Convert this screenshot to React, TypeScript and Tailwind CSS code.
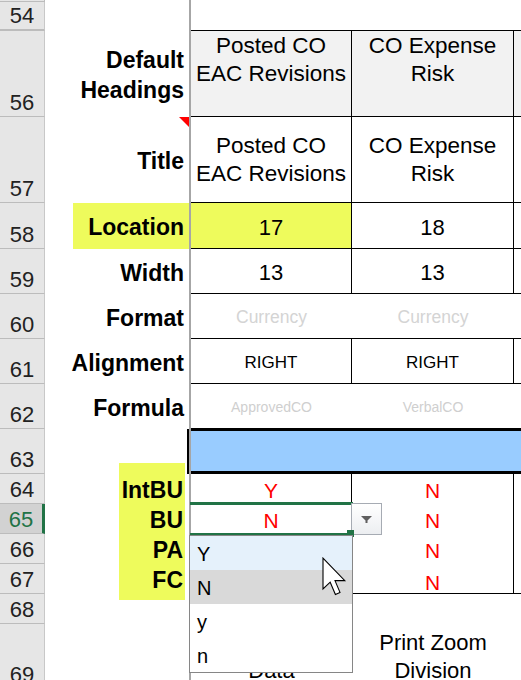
import React from 'react';

const LBL =
  'w-[144px] shrink-0 flex items-center justify-end pr-[5px] pt-[2px] text-right font-bold text-[23px] leading-[30px]';

function Head({
  n,
  active,
  thick,
  className = '',
}: {
  n?: string;
  active?: boolean;
  thick?: boolean;
  className?: string;
}) {
  return (
    <div
      className={`w-[45px] shrink-0 flex items-end justify-center pb-[2px] text-[22px] leading-[22px] border-b-[#bcbcbc] ${
        thick ? 'border-b-2' : 'border-b'
      } ${
        active
          ? 'bg-[#d2d2d2] text-[#217346] border-r-[3px] border-r-[#217346]'
          : 'bg-[#e6e6e6] text-[#222222] border-r border-r-[#c8c8c8]'
      } ${className}`}
    >
      {n}
    </div>
  );
}

const Split = () => <div className="w-[2px] shrink-0 bg-[#a6a6a6]" />;

function Caret() {
  return (
    <svg width="11" height="7" viewBox="0 0 11 7">
      <path d="M0 0 H11 L6.5 4.5 V7 H4.5 V4.5 Z" fill="#5f5f5f" />
    </svg>
  );
}

function Cursor() {
  return (
    <svg width="28" height="42" viewBox="0 0 14 21">
      <path
        d="M1 1 L1 16.5 L4.6 13.1 L7.2 19.2 L9.5 18.2 L7 12.3 L11.9 12.3 Z"
        fill="white"
        stroke="black"
        strokeWidth="0.55"
      />
    </svg>
  );
}

export default function App() {
  return (
    <div className="h-[680px] w-[521px] overflow-hidden bg-white text-black font-['Liberation_Sans',Arial,sans-serif]">
      {/* 53 */}
      <div className="flex h-[2px]">
        <div className="w-[45px] shrink-0 bg-[#e6e6e6] border-b border-r border-[#bcbcbc]" />
        <div className="w-[144px] shrink-0" />
        <Split />
        <div className="flex-1" />
      </div>

      {/* 54 */}
      <div className="flex h-[29px]">
        <Head n="54" thick />
        <div className="w-[144px] shrink-0" />
        <Split />
        <div className="flex-1 min-w-0 border-b border-black" />
      </div>

      {/* 56 */}
      <div className="flex h-[86px]">
        <Head n="56" />
        <div className={LBL}>
          <div>
            Default
            <br />
            Headings
          </div>
        </div>
        <Split />
        <div className="w-[161px] shrink-0 bg-[#f2f2f2] border-b border-r border-black pt-[1px] text-center text-[22.5px] leading-[28px]">
          Posted CO
          <br />
          EAC Revisions
        </div>
        <div className="w-[162px] shrink-0 bg-[#f2f2f2] border-b border-r border-black pt-[1px] text-center text-[22.5px] leading-[28px]">
          CO Expense
          <br />
          Risk
        </div>
        <div className="flex-1 min-w-0 bg-[#f2f2f2] border-b border-black" />
      </div>

      {/* 57 */}
      <div className="flex h-[86px]">
        <Head n="57" />
        <div className={`${LBL} relative`}>
          <div>Title</div>
          <svg className="absolute top-0 right-0" width="10" height="10" viewBox="0 0 10 10">
            <polygon points="0,0 10,0 10,10" fill="#ff0000" />
          </svg>
        </div>
        <Split />
        <div className="w-[161px] shrink-0 flex items-center justify-center border-b border-r border-black text-center text-[22.5px] leading-[28px]">
          <div>
            Posted CO
            <br />
            EAC Revisions
          </div>
        </div>
        <div className="w-[162px] shrink-0 flex items-center justify-center border-b border-r border-black text-center text-[22.5px] leading-[28px]">
          <div>
            CO Expense
            <br />
            Risk
          </div>
        </div>
        <div className="flex-1 min-w-0 border-b border-black" />
      </div>

      {/* 58 */}
      <div className="flex h-[46px]">
        <Head n="58" />
        <div className="w-[144px] shrink-0 flex justify-end">
          <div className="w-[116px] bg-[#eefb5c] flex items-center justify-end pr-[5px] pt-[2px] font-bold text-[23px]">
            Location
          </div>
        </div>
        <Split />
        <div className="w-[161px] shrink-0 flex items-center justify-center bg-[#eefb5c] border-b border-r border-black pt-[3px] text-[22px]">
          17
        </div>
        <div className="w-[162px] shrink-0 flex items-center justify-center border-b border-r border-black pt-[3px] text-[22px]">
          18
        </div>
        <div className="flex-1 min-w-0 border-b border-black" />
      </div>

      {/* 59 */}
      <div className="flex h-[45px]">
        <Head n="59" />
        <div className={LBL}>Width</div>
        <Split />
        <div className="w-[161px] shrink-0 flex items-center justify-center border-b border-r border-black pt-[3px] text-[22px]">
          13
        </div>
        <div className="w-[162px] shrink-0 flex items-center justify-center border-b border-r border-black pt-[3px] text-[22px]">
          13
        </div>
        <div className="flex-1 min-w-0 border-b border-black" />
      </div>

      {/* 60 */}
      <div className="flex h-[45px]">
        <Head n="60" />
        <div className={LBL}>Format</div>
        <Split />
        <div className="w-[161px] shrink-0 flex items-center justify-center border-b border-black pt-[3px] text-[17.5px] text-[#d4d4d4]">
          Currency
        </div>
        <div className="w-[162px] shrink-0 flex items-center justify-center border-b border-black pt-[3px] text-[17.5px] text-[#d4d4d4]">
          Currency
        </div>
        <div className="flex-1 min-w-0 border-b border-black" />
      </div>

      {/* 61 */}
      <div className="flex h-[45px]">
        <Head n="61" />
        <div className={LBL}>Alignment</div>
        <Split />
        <div className="w-[161px] shrink-0 flex items-center justify-center border-b border-r border-black pt-[3px] text-[17px]">
          RIGHT
        </div>
        <div className="w-[162px] shrink-0 flex items-center justify-center border-b border-r border-black pt-[3px] text-[17px]">
          RIGHT
        </div>
        <div className="flex-1 min-w-0 border-b border-black" />
      </div>

      {/* 62 */}
      <div className="flex h-[45px]">
        <Head n="62" />
        <div className={LBL}>Formula</div>
        <Split />
        <div className="w-[161px] shrink-0 flex items-center justify-center border-b border-black pt-[3px] text-[14px] text-[#cfcfcf]">
          ApprovedCO
        </div>
        <div className="w-[162px] shrink-0 flex items-center justify-center border-b border-black pt-[3px] text-[14px] text-[#cfcfcf]">
          VerbalCO
        </div>
        <div className="flex-1 min-w-0 border-b border-black" />
      </div>

      {/* 63 */}
      <div className="flex h-[45px]">
        <Head n="63" />
        <div className="w-[144px] shrink-0 border-r-2 border-black" />
        <Split />
        <div className="flex-1 min-w-0 bg-[#99ccff] border-t-2 border-b-[3px] border-black" />
      </div>

      {/* 64 - 67 */}
      <div className="flex h-[120px]">
        <div className="w-[45px] shrink-0 flex flex-col">
          <Head n="64" className="h-[30px]" />
          <Head n="65" active className="h-[30px]" />
          <Head n="66" className="h-[30px]" />
          <Head n="67" className="h-[30px]" />
        </div>
        <div className="w-[144px] shrink-0 flex items-start justify-end pr-[4px]">
          <div className="-mt-[11px] h-[137px] w-[66px] shrink-0 bg-[#eefb5c] pt-[12px] pr-[2px] text-right font-bold text-[23px] leading-[30px]">
            IntBU
            <br />
            BU
            <br />
            PA
            <br />
            FC
          </div>
        </div>
        <Split />
        <div className="w-[161px] shrink-0 flex flex-col border-r border-b border-black text-[21px] text-[#ff0000]">
          <div className="h-[30px] shrink-0 flex items-center justify-center pt-[3px]">Y</div>
          <div className="relative h-[30px] shrink-0 flex items-center justify-center pt-[3px]">
            N
            <div className="absolute left-[-1px] top-[-2px] w-[163px] h-[34px] border-y-[3px] border-[#217346]" />
            <div className="absolute left-[160px] top-[-1px] w-[31px] h-[32px] flex items-center justify-center border border-[#a6abb3] bg-linear-to-b from-white to-[#eceef1]">
              <Caret />
            </div>
            <div className="absolute left-[156px] top-[26px] w-[7px] h-[7px] bg-[#217346]" />
            <div className="absolute left-[-2px] top-[31px] z-10 w-[164px] border border-[#868686] bg-white text-black text-[20px]">
              <div className="h-[34px] flex items-center pl-[7px] pt-[2px] bg-[#e5f1fb]">Y</div>
              <div className="h-[34px] flex items-center pl-[7px] pt-[2px] bg-[#d9d9d9]">N</div>
              <div className="h-[34px] flex items-center pl-[7px] pt-[2px]">y</div>
              <div className="h-[34px] flex items-center pl-[7px] pt-[2px]">n</div>
              <div className="absolute left-[131px] top-[20px]">
                <Cursor />
              </div>
            </div>
          </div>
          <div className="h-[30px] shrink-0 flex items-center justify-center pt-[3px]">N</div>
          <div className="flex-1 flex items-center justify-center pt-[3px]">N</div>
        </div>
        <div className="w-[162px] shrink-0 flex flex-col border-r border-b border-black text-[21px] text-[#ff0000]">
          <div className="h-[30px] shrink-0 flex items-center justify-center pt-[3px]">N</div>
          <div className="h-[30px] shrink-0 flex items-center justify-center pt-[3px]">N</div>
          <div className="h-[30px] shrink-0 flex items-center justify-center pt-[3px]">N</div>
          <div className="flex-1 flex items-center justify-center pt-[3px]">N</div>
        </div>
        <div className="flex-1 min-w-0 border-b border-black" />
      </div>

      {/* 68 */}
      <div className="flex h-[30px]">
        <Head n="68" />
        <div className="w-[144px] shrink-0" />
        <Split />
        <div className="flex-1" />
      </div>

      {/* 69 */}
      <div className="flex h-[65px]">
        <Head n="69" />
        <div className="w-[144px] shrink-0" />
        <Split />
        <div className="w-[161px] shrink-0 flex items-center justify-center text-center text-[22px] leading-[28px]">
          <div>
            Print Zoom
            <br />
            Data
          </div>
        </div>
        <div className="w-[162px] shrink-0 flex items-center justify-center text-center text-[22px] leading-[28px]">
          <div>
            Print Zoom
            <br />
            Division
          </div>
        </div>
        <div className="flex-1" />
      </div>
    </div>
  );
}
